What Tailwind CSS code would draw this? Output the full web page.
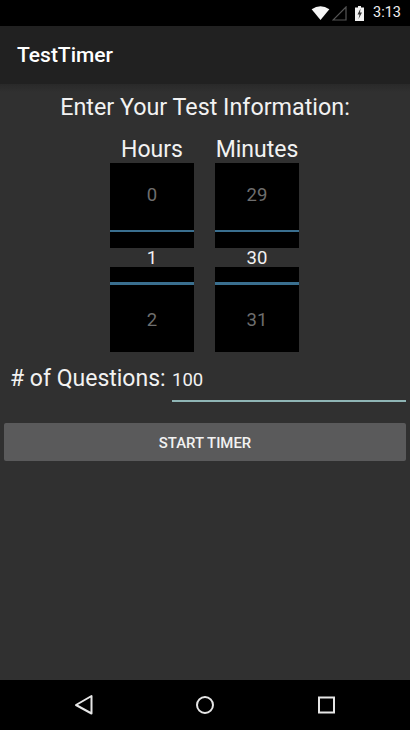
<!DOCTYPE html>
<html>
<head>
<meta charset="utf-8">
<script src="https://cdn.jsdelivr.net/npm/@tailwindcss/browser@4"></script>
</head>
<body class="m-0">
<div class="w-[410px] h-[730px] flex flex-col overflow-hidden bg-[#303030] text-white font-['Roboto',sans-serif]">
  <div class="h-[26px] bg-black flex items-center justify-end shrink-0">
    <svg class="w-[19px] h-[14px] mr-[2px]" viewBox="0 0 19 15"><path d="M0 3.5Q9.500 -3 19 3.500L9.500 15Z" fill="#f5f5f5"/></svg>
    <svg class="w-[15px] h-[15px] mr-[8px]" viewBox="0 0 15 15"><path d="M14 1V14H1Z" fill="none" stroke="#555" stroke-width="1.200"/></svg>
    <svg class="w-[9px] h-[15px] mr-[9px]" viewBox="0 0 9 15"><path d="M3 0H6V1.500H9V15H0V1.500H3Z" fill="#f2f2f2"/><path d="M5.500 2.500L2.500 8.500H4.500L3.500 13L7 6.500H5Z" fill="#333"/></svg>
    <span class="text-[14.5px] leading-none text-[#f0f0f0] mr-[9px]">3:13</span>
  </div>
  <div class="h-[58px] bg-[#212121] flex items-center pl-[17px] pt-[2px] text-[21px] font-medium shrink-0">TestTimer</div>
  <main class="flex-1 flex flex-col bg-[linear-gradient(#292929,#303030_8px)]">
    <h1 class="h-[30px] mt-[8px] text-center text-[23.300px] leading-[30px] font-normal text-[#f2f2f2]">Enter Your Test Information:</h1>
    <div class="flex justify-center gap-[21px] mt-[15px] pr-[1px]">
      <div class="w-[84px] flex flex-col items-center">
        <div class="h-[26px] text-[23px] leading-[26px] text-[#f2f2f2]">Hours</div>
        <div class="w-full h-[85px] bg-black relative flex justify-center pt-[20px] text-[18.500px] leading-[24px] text-[#6e6e6e]">0<span class="absolute left-0 right-0 top-[67px] h-[2px] bg-[#3a6f8f]"></span></div>
        <div class="h-[19px] text-[18.500px] leading-[20px] text-[#f2f2f2]">1</div>
        <div class="w-full h-[85px] bg-black relative flex justify-center pt-[41px] text-[18.500px] leading-[24px] text-[#6e6e6e]">2<span class="absolute left-0 right-0 top-[15px] h-[3px] bg-[#3a6f8f]"></span></div>
      </div>
      <div class="w-[84px] flex flex-col items-center">
        <div class="h-[26px] text-[23px] leading-[26px] text-[#f2f2f2]">Minutes</div>
        <div class="w-full h-[85px] bg-black relative flex justify-center pt-[20px] text-[18.500px] leading-[24px] text-[#6e6e6e]">29<span class="absolute left-0 right-0 top-[67px] h-[2px] bg-[#3a6f8f]"></span></div>
        <div class="h-[19px] text-[18.500px] leading-[20px] text-[#f2f2f2]">30</div>
        <div class="w-full h-[85px] bg-black relative flex justify-center pt-[41px] text-[18.500px] leading-[24px] text-[#6e6e6e]">31<span class="absolute left-0 right-0 top-[15px] h-[3px] bg-[#3a6f8f]"></span></div>
      </div>
    </div>
    <div class="flex mt-[12px] h-[48px] pl-[10px] pr-[4px]">
      <div class="w-[162px] text-[23px] leading-[30px] whitespace-nowrap text-[#f2f2f2]"># of Questions:</div>
      <div class="flex-1 h-[38px] border-b-2 border-[#8fb5b5] text-[18.500px] leading-[32px] text-[#f2f2f2]">100</div>
    </div>
    <button class="mx-[4px] mt-[11px] h-[38px] pt-[2px] rounded-[2px] bg-[#5a5a5b] text-[14.900px] font-medium text-[#f2f2f2]">START TIMER</button>
  </main>
  <nav class="h-[50px] bg-black flex items-center shrink-0 pl-[74px] pr-[74px] justify-between">
    <svg class="w-[20px] h-[22px]" viewBox="0 0 20 22"><path d="M17.500 2V19.500L2 11Z" fill="none" stroke="#e6e6e6" stroke-width="2" stroke-linejoin="round"/></svg>
    <svg class="w-[20px] h-[20px]" viewBox="0 0 20 20"><circle cx="10" cy="10" r="8" fill="none" stroke="#e6e6e6" stroke-width="2"/></svg>
    <svg class="w-[20px] h-[20px]" viewBox="0 0 20 20"><rect x="3" y="2.500" width="15" height="15" fill="none" stroke="#e6e6e6" stroke-width="2"/></svg>
  </nav>
</div>
</body>
</html>
